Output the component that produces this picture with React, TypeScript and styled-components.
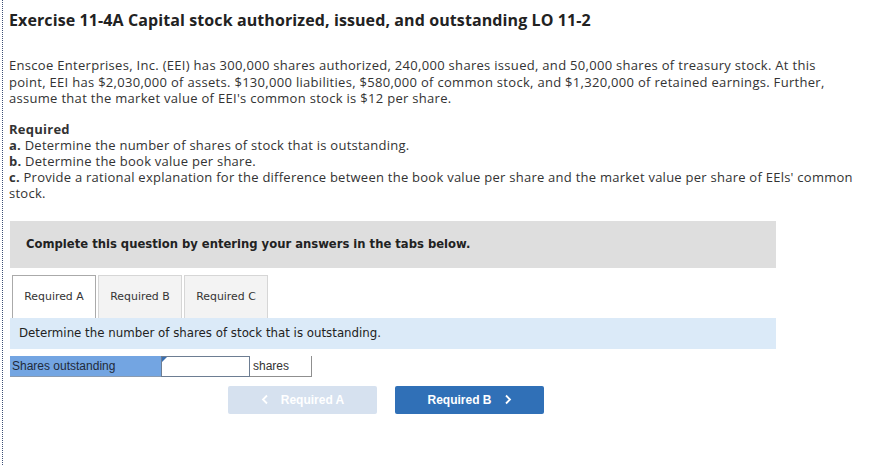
import styled, { createGlobalStyle } from 'styled-components';

const GlobalStyle = createGlobalStyle`
  html, body {
    margin: 0;
    padding: 0;
    background: #ffffff;
  }
  * {
    box-sizing: border-box;
  }
`;

function ChevronLeft() {
	return (
		<svg width="8" height="11" viewBox="0 0 8 11" fill="none">
			<path d="M6 1.5L2 5.5L6 9.5" stroke="currentColor" strokeWidth="1.8" />
		</svg>
	);
}

function ChevronRight() {
	return (
		<svg width="8" height="11" viewBox="0 0 8 11" fill="none">
			<path d="M2 1.5L6 5.5L2 9.5" stroke="currentColor" strokeWidth="1.8" />
		</svg>
	);
}

function App() {
	return (
		<Page>
			<GlobalStyle />

			<Title>Exercise 11-4A Capital stock authorized, issued, and outstanding LO 11-2</Title>

			<Paragraph>
				<Line>Enscoe Enterprises, Inc. (EEI) has 300,000 shares authorized, 240,000 shares issued, and 50,000 shares of treasury stock. At this</Line>
				<Line>point, EEI has $2,030,000 of assets. $130,000 liabilities, $580,000 of common stock, and $1,320,000 of retained earnings. Further,</Line>
				<Line>assume that the market value of EEI's common stock is $12 per share.</Line>
			</Paragraph>

			<Required>
				<Line><Mark>Required</Mark></Line>
				<Line><Mark>a.</Mark> Determine the number of shares of stock that is outstanding.</Line>
				<Line><Mark>b.</Mark> Determine the book value per share.</Line>
				<Line><Mark>c.</Mark> Provide a rational explanation for the difference between the book value per share and the market value per share of EEls' common</Line>
				<Line>stock.</Line>
			</Required>

			<Notice>Complete this question by entering your answers in the tabs below.</Notice>

			<TabBar>
				<Tab active>Required A</Tab>
				<Tab>Required B</Tab>
				<Tab>Required C</Tab>
			</TabBar>

			<Prompt>Determine the number of shares of stock that is outstanding.</Prompt>

			<AnswerRow>
				<AnswerLabel>Shares outstanding</AnswerLabel>
				<AnswerInput />
				<Unit>shares</Unit>
			</AnswerRow>

			<NavRow>
				<NavButton disabled>
					<ChevronLeft />
					Required A
				</NavButton>
				<NavButton>
					Required B
					<ChevronRight />
				</NavButton>
			</NavRow>
		</Page>
	);
}

export default App;

const Page = styled.div`
  margin-left: 2px;
  min-height: 465px;
  border-left: 1px dotted #3d5077;
  padding: 10px 0 0 6px;
  color: #333333;
  font-family: "Open Sans", Lato, sans-serif;
`;

const Title = styled.h1`
  margin: 0;
  font-size: 16px;
  line-height: 20px;
  font-weight: 700;
  letter-spacing: 0.1px;
  color: #222222;
  white-space: nowrap;
`;

const Paragraph = styled.div`
  margin: 27px 0 0;
  font-size: 13px;
  line-height: 16.5px;
  letter-spacing: 0.3px;
  white-space: nowrap;
`;

const Required = styled.div`
  margin: 14px 0 0;
  font-size: 13px;
  line-height: 16px;
  letter-spacing: 0.25px;
  white-space: nowrap;
`;

const Line = styled.div``;

const Mark = styled.b`
  display: inline-block;
  font-weight: 700;
  line-height: 16px;
`;

const Notice = styled.div`
  margin: 20px 0 0 1px;
  width: 766px;
  height: 47px;
  background: #dedede;
  display: flex;
  align-items: center;
  padding-left: 16px;
  font-family: "DejaVu Sans", Verdana, sans-serif;
  font-weight: 700;
  font-size: 11.6px;
  color: #222222;
`;

const TabBar = styled.div`
  display: flex;
  gap: 2px;
  margin: 7px 0 0 3px;
  height: 43px;
`;

const Tab = styled.div<{ active?: boolean }>`
  width: 84px;
  display: flex;
  align-items: center;
  justify-content: center;
  border: 1px solid ${props => (props.active ? '#aaaaaa' : '#d6d6d6')};
  border-bottom: none;
  background: ${props => (props.active ? '#ffffff' : '#f3f3f3')};
  font-family: "DejaVu Sans", Verdana, sans-serif;
  font-size: 10.9px;
  color: #333333;
`;

const Prompt = styled.div`
  margin-left: 1px;
  width: 766px;
  height: 31px;
  background: #dbeaf8;
  display: flex;
  align-items: center;
  padding-left: 9px;
  font-family: "DejaVu Sans", Verdana, sans-serif;
  font-size: 11.8px;
  color: #222222;
`;

const AnswerRow = styled.div`
  display: flex;
  margin: 7px 0 0 1px;
  height: 21px;
`;

const AnswerLabel = styled.div`
  width: 151px;
  background: #73a5e2;
  border-bottom: 1px solid #8a9bb0;
  display: flex;
  align-items: center;
  padding-left: 2px;
  font-family: "Liberation Sans", Arial, sans-serif;
  font-size: 12px;
  color: #1f2a3a;
`;

const AnswerInput = styled.div`
  position: relative;
  width: 89px;
  background: #ffffff;
  border: 1px solid #6d7d92;

  &::before {
    content: '';
    position: absolute;
    top: 0;
    left: 0;
    border-top: 5px solid #3a6fb0;
    border-right: 5px solid transparent;
  }
`;

const Unit = styled.div`
  width: 62px;
  border-right: 1px solid #8f8f8f;
  border-bottom: 1px solid #8f8f8f;
  display: flex;
  align-items: center;
  padding-left: 3px;
  font-family: "Liberation Sans", Arial, sans-serif;
  font-size: 12px;
  color: #333333;
`;

const NavRow = styled.div`
  display: flex;
  gap: 18px;
  margin: 9px 0 0 219px;
`;

const NavButton = styled.button`
  width: 149px;
  height: 28px;
  border: none;
  border-radius: 2px;
  display: flex;
  align-items: center;
  justify-content: center;
  gap: 12px;
  background: ${props => (props.disabled ? '#d6e1ef' : '#3070b7')};
  color: #ffffff;
  font-family: "Liberation Sans", Arial, sans-serif;
  font-weight: 700;
  font-size: 12px;
  padding: 0;
  cursor: ${props => (props.disabled ? 'default' : 'pointer')};
`;
